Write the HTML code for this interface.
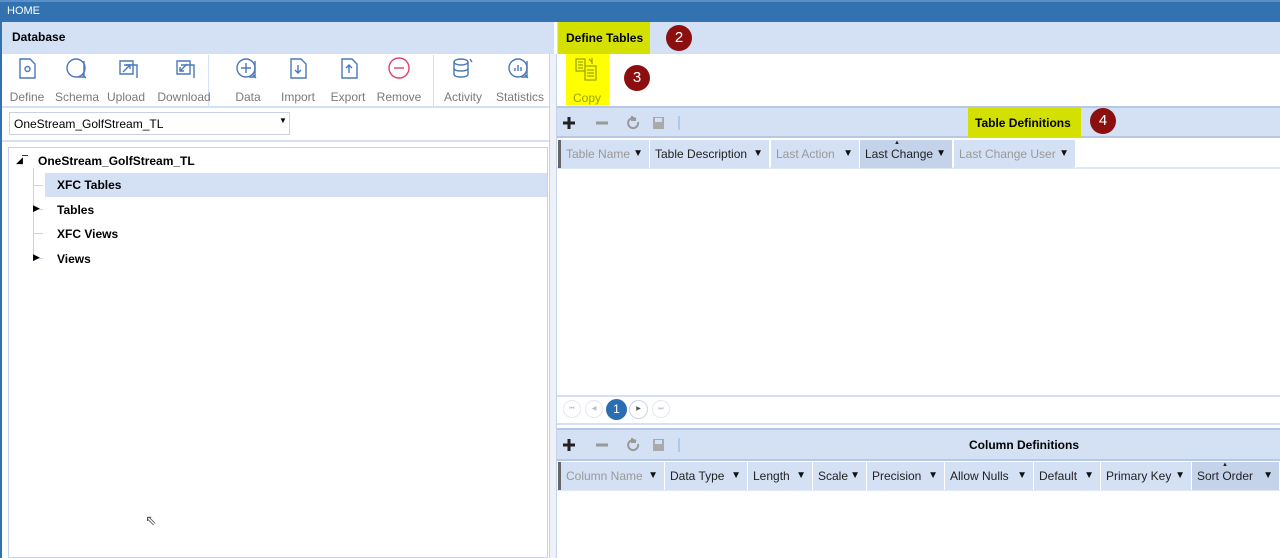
<!DOCTYPE html>
<html><head><meta charset="utf-8"><style>
*{margin:0;padding:0;box-sizing:border-box}
body{width:1280px;height:558px;overflow:hidden;background:#fff;font-family:"Liberation Sans",sans-serif;font-size:12px;color:#000;position:relative}
.a{position:absolute}
.lbl{position:absolute;top:90px;font-size:12px;color:#7a7a7a;text-align:center;width:60px}
.b{font-weight:bold}
.circ{position:absolute;width:26px;height:26px;border-radius:50%;background:#8b0f0f;color:#fff;font-size:15px;text-align:center;line-height:26px}
.hd{position:absolute;height:28px;background:#d4e0f4;border-right:1px solid #fff;font-size:12px;line-height:28px;padding-left:5px;color:#222}
.hd.g{color:#999}
.f{position:absolute;right:6px;top:0;font-size:10px;color:#111}
</style></head><body>
<!-- top bar -->
<div class="a" style="left:0;top:0;width:1280px;height:22px;background:#3272b0;border-top:2px solid #5b8fc8"></div>
<div class="a" style="left:7px;top:5px;color:#fff;font-size:11px">HOME</div>
<div class="a" style="left:0;top:22px;width:2px;height:536px;background:#3272b0"></div>
<!-- left header -->
<div class="a" style="left:2px;top:22px;width:552px;height:32px;background:#d4e0f4"></div>
<div class="a b" style="left:12px;top:30px">Database</div>
<div class="a" style="left:208px;top:55px;width:1px;height:52px;background:#d4e0f4"></div>
<div class="a" style="left:433px;top:55px;width:1px;height:52px;background:#d4e0f4"></div>
<div class="a" style="left:2px;top:106px;width:552px;height:2px;background:#d4e0f4"></div>
<svg class="a" style="left:0;top:54px" width="554" height="34" fill="none" stroke="#4a78b8" stroke-width="1.4">
<path d="M20 5h10l5 5v14H20z"/><circle cx="27.5" cy="15" r="2.5"/>
<circle cx="76" cy="14" r="9"/><path d="M82 20l4 4M84 7v16h-6"/>
<path d="M120 7h13v13h-13z M124 11h13v13"/><path d="M123 18l7-7M126 11h4v4"/>
<path d="M177 7h13v13h-13z M181 11h13v13"/><path d="M187 10l-7 7M180 13v4h4"/>
<circle cx="246" cy="14" r="9"/><path d="M246 9v10M241 14h10M252 20l4 4M255 7v16h-6"/>
<path d="M291 5h10l5 5v14h-15z M298 11v8M295 16l3 3 3-3"/>
<path d="M342 5h10l5 5v14h-15z M349 19v-8M346 14l3-3 3 3"/>
<circle cx="399" cy="14" r="10" stroke="#e0406a"/><path d="M394 14h10" stroke="#e0406a"/>
<ellipse cx="461" cy="8" rx="7" ry="3"/><path d="M454 8v12c0 2 3 3 7 3s7-1 7-3V8M454 14c0 2 3 3 7 3s7-1 7-3M470 5l2 3"/>
<circle cx="518" cy="14" r="9"/><path d="M515 17v-3M518 17v-6M521 17v-4M524 20l4 4M527 7v16h-6"/>
</svg>
<div class="lbl" style="left:-3px">Define</div>
<div class="lbl" style="left:47px">Schema</div>
<div class="lbl" style="left:96px">Upload</div>
<div class="lbl" style="left:154px">Download</div>
<div class="lbl" style="left:218px">Data</div>
<div class="lbl" style="left:268px">Import</div>
<div class="lbl" style="left:318px">Export</div>
<div class="lbl" style="left:369px">Remove</div>
<div class="lbl" style="left:433px">Activity</div>
<div class="lbl" style="left:490px">Statistics</div>
<!-- dropdown -->
<div class="a" style="left:9px;top:112px;width:281px;height:23px;border:1px solid #c8d2e0"></div>
<div class="a" style="left:14px;top:117px">OneStream_GolfStream_TL</div>
<div class="a" style="left:279px;top:116px;font-size:8px">▼</div>
<div class="a" style="left:2px;top:140px;width:552px;height:2px;background:#d4e0f4"></div>
<!-- tree -->
<div class="a" style="left:8px;top:147px;width:540px;height:411px;border:1px solid #c4d2ea"></div>
<div class="a" style="left:45px;top:173px;width:502px;height:24px;background:#d4e0f4"></div>
<div class="a" style="left:33px;top:168px;width:1px;height:90px;background:#c8d4e4"></div>
<div class="a" style="left:34px;top:185px;width:9px;height:1px;background:#c8d4e4"></div>
<div class="a" style="left:34px;top:209px;width:9px;height:1px;background:#c8d4e4"></div>
<div class="a" style="left:34px;top:233px;width:9px;height:1px;background:#c8d4e4"></div>
<div class="a" style="left:34px;top:258px;width:9px;height:1px;background:#c8d4e4"></div>
<div class="a" style="left:16px;top:155px;font-size:9px">◢</div>
<div class="a" style="left:22px;top:155px;width:6px;height:1px;background:#333"></div>
<div class="a b" style="left:38px;top:154px">OneStream_GolfStream_TL</div>
<div class="a b" style="left:57px;top:178px">XFC Tables</div>
<div class="a" style="left:33px;top:203px;font-size:9px">▶</div><div class="a b" style="left:57px;top:203px">Tables</div>
<div class="a b" style="left:57px;top:227px">XFC Views</div>
<div class="a" style="left:33px;top:252px;font-size:9px">▶</div><div class="a b" style="left:57px;top:252px">Views</div>
<div class="a" style="left:145px;top:512px;font-size:14px;color:#555">⇖</div>
<!-- splitter -->
<div class="a" style="left:549px;top:54px;width:8px;height:504px;background:#eef2f8;border-left:1px solid #c4d2ea;border-right:1px solid #c4d2ea"></div>
<!-- right header -->
<div class="a" style="left:557px;top:22px;width:723px;height:32px;background:#d4e0f4"></div>
<div class="a" style="left:558px;top:22px;width:92px;height:32px;background:#d4e000"></div>
<div class="a b" style="left:566px;top:31px;font-size:12px">Define Tables</div>
<div class="circ" style="left:666px;top:25px">2</div>
<div class="a" style="left:566px;top:54px;width:43px;height:51px;background:#ffff00"></div>
<svg class="a" style="left:574px;top:57px" width="26" height="26" fill="none" stroke="#9aa800" stroke-width="1.3"><path d="M2 2h9v12H2zM4 5h5M4 8h5M4 11h5M11 9h11v14H11zM13 13h7M13 16h7M13 19h7M15 2l3 3M18 1v6"/></svg>
<div class="a" style="left:573px;top:91px;color:#9aa000">Copy</div>
<div class="circ" style="left:624px;top:65px">3</div>
<!-- table defs toolbar -->
<div class="a" style="left:557px;top:106px;width:723px;height:32px;background:#d4e0f4;border-top:2px solid #b8c8e4;border-bottom:2px solid #b8c8e4"></div>
<div class="a" style="left:968px;top:107px;width:113px;height:30px;background:#d4e000"></div>
<div class="a b" style="left:975px;top:116px">Table Definitions</div>
<div class="circ" style="left:1090px;top:108px">4</div>
<svg class="a" style="left:560px;top:112px" width="130" height="22"><path d="M9 5v12M3 11h12" stroke="#222" stroke-width="3"/><path d="M36 11h12" stroke="#999" stroke-width="3"/><path d="M76 7a5 5 0 1 0 2 3M72 4v4h4" stroke="#999" stroke-width="2" fill="none"/><rect x="93" y="5" width="11" height="12" fill="#aaa"/><rect x="95" y="6" width="7" height="4" fill="#d4e0f4"/><path d="M119 4v14" stroke="#8ab0e0"/></svg>
<!-- grid header -->
<div class="a" style="left:557px;top:139px;width:723px;height:30px;border-bottom:2px solid #e0e8f4"></div>
<div class="a" style="left:558px;top:140px;width:3px;height:28px;background:#666"></div>
<div class="hd g" style="left:561px;top:140px;width:89px">Table Name<span class="f">▼</span></div>
<div class="hd" style="left:650px;top:140px;width:120px">Table Description<span class="f">▼</span></div>
<div class="hd g" style="left:771px;top:140px;width:89px">Last Action<span class="f">▼</span></div>
<div class="hd" style="left:860px;top:140px;width:93px;background:#c4d2ea">Last Change<span class="f">▼</span><span class="a" style="left:34px;top:-11px;font-size:6px">▲</span></div>
<div class="hd g" style="left:954px;top:140px;width:122px">Last Change User<span class="f">▼</span></div>
<!-- pager -->
<div class="a" style="left:557px;top:395px;width:723px;height:2px;background:#d4e0f4"></div>
<div class="a" style="left:557px;top:423px;width:723px;height:2px;background:#d4e0f4"></div>
<div class="a" style="left:563px;top:400px;width:18px;height:18px;border:1px solid #e4e8f0;border-radius:50%;font-size:6px;color:#bbb;text-align:center;line-height:16px">⏮</div>
<div class="a" style="left:585px;top:400px;width:18px;height:18px;border:1px solid #e4e8f0;border-radius:50%;font-size:6px;color:#bbb;text-align:center;line-height:16px">◀</div>
<div class="a" style="left:606px;top:399px;width:21px;height:21px;background:#2a6db0;border-radius:50%;color:#fff;text-align:center;line-height:21px">1</div>
<div class="a" style="left:629px;top:400px;width:19px;height:19px;border:1px solid #c8d4ea;border-radius:50%;font-size:6px;color:#555;text-align:center;line-height:17px">▶</div>
<div class="a" style="left:652px;top:400px;width:18px;height:18px;border:1px solid #e4e8f0;border-radius:50%;font-size:6px;color:#bbb;text-align:center;line-height:16px">⏭</div>
<!-- column defs toolbar -->
<div class="a" style="left:557px;top:428px;width:723px;height:33px;background:#d4e0f4;border-top:2px solid #b8c8e4;border-bottom:2px solid #b8c8e4"></div>
<div class="a b" style="left:969px;top:438px">Column Definitions</div>
<svg class="a" style="left:560px;top:434px" width="130" height="22"><path d="M9 5v12M3 11h12" stroke="#222" stroke-width="3"/><path d="M36 11h12" stroke="#999" stroke-width="3"/><path d="M76 7a5 5 0 1 0 2 3M72 4v4h4" stroke="#999" stroke-width="2" fill="none"/><rect x="93" y="5" width="11" height="12" fill="#aaa"/><rect x="95" y="6" width="7" height="4" fill="#d4e0f4"/><path d="M119 4v14" stroke="#8ab0e0"/></svg>
<div class="a" style="left:557px;top:461px;width:723px;height:30px;border-bottom:2px solid #e0e8f4"></div>
<div class="a" style="left:558px;top:462px;width:3px;height:28px;background:#666"></div>
<div class="hd g" style="left:561px;top:462px;width:104px">Column Name<span class="f">▼</span></div>
<div class="hd" style="left:665px;top:462px;width:83px">Data Type<span class="f">▼</span></div>
<div class="hd" style="left:748px;top:462px;width:65px">Length<span class="f">▼</span></div>
<div class="hd" style="left:813px;top:462px;width:54px">Scale<span class="f">▼</span></div>
<div class="hd" style="left:867px;top:462px;width:78px">Precision<span class="f">▼</span></div>
<div class="hd" style="left:945px;top:462px;width:89px">Allow Nulls<span class="f">▼</span></div>
<div class="hd" style="left:1034px;top:462px;width:67px">Default<span class="f">▼</span></div>
<div class="hd" style="left:1101px;top:462px;width:91px">Primary Key<span class="f">▼</span></div>
<div class="hd" style="left:1192px;top:462px;width:88px;background:#c4d2ea">Sort Order<span class="f">▼</span><span class="a" style="left:30px;top:-11px;font-size:6px">▲</span></div>
</body></html>
